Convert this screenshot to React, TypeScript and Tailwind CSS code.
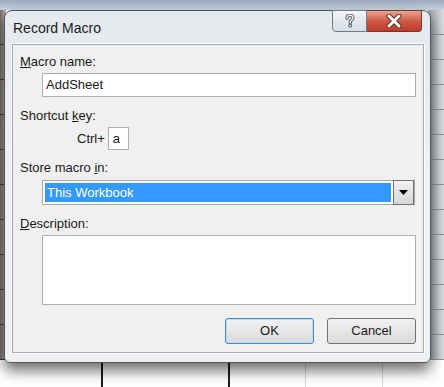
import React from "react";

const font = { fontFamily: '"Liberation Sans", Arial, sans-serif' };

function HelpGlyph() {
  return (
    <svg width="12" height="14" viewBox="0 0 12 14">
      <path
        d="M3 4.2 C3 2.2 4.4 1.3 6 1.3 C7.8 1.3 9 2.4 9 3.9 C9 5.6 7.4 6 6.6 7 C6.2 7.5 6.2 8 6.2 8.8"
        fill="none"
        stroke="#4b5563"
        strokeWidth="3.2"
        strokeLinecap="round"
      />
      <path
        d="M3 4.2 C3 2.2 4.4 1.3 6 1.3 C7.8 1.3 9 2.4 9 3.9 C9 5.6 7.4 6 6.6 7 C6.2 7.5 6.2 8 6.2 8.8"
        fill="none"
        stroke="#eef0f2"
        strokeWidth="1.4"
        strokeLinecap="round"
      />
      <circle cx="6.2" cy="11.6" r="1.9" fill="#4b5563" />
      <circle cx="6.2" cy="11.6" r="0.9" fill="#eef0f2" />
    </svg>
  );
}

function CloseGlyph() {
  return (
    <svg width="16" height="14" viewBox="0 0 16 14">
      <path d="M3 2 L13 12 M13 2 L3 12" stroke="#5a2a22" strokeWidth="5" strokeLinecap="round" />
      <path d="M3 2 L13 12 M13 2 L3 12" stroke="#ffffff" strokeWidth="3" strokeLinecap="round" />
    </svg>
  );
}

export default function App() {
  return (
    <div
      className="relative w-[444px] h-[387px] overflow-hidden bg-white flex flex-col"
      style={font}
    >
      {/* background spreadsheet (desktop behind the window) */}
      <div className="h-[10px] bg-gradient-to-b from-[#98a9bf] to-[#c9d3df]" />
      <div className="h-[350px] flex justify-between">
        <div className="w-[6px] bg-[repeating-linear-gradient(to_bottom,transparent_0px,transparent_34px,#3d3d3d_34px,#3d3d3d_35px),linear-gradient(to_right,#6f6a66,#b9b6b2)]" />
        <div className="w-[16px] bg-[repeating-linear-gradient(to_bottom,transparent_0px,transparent_24px,#8f949a_24px,#8f949a_25px),linear-gradient(to_right,#9a9ea4,#dcdfe2)]" />
      </div>
      <div className="flex-1 flex">
        <div className="w-[101px]" />
        <div className="w-[2px] bg-[#1e1e1e]" />
        <div className="w-[125px]" />
        <div className="w-[2px] bg-[#1e1e1e]" />
        <div className="w-[75px]" />
        <div className="w-[1px] bg-[#d4d4d4]" />
        <div className="w-[76px]" />
        <div className="w-[1px] bg-[#d4d4d4]" />
      </div>

      {/* dialog window */}
      <div className="absolute left-[4px] top-[10px] w-[427px] h-[353px] rounded-t-[8px] rounded-b-[6px] border border-[#4d5660] bg-gradient-to-b from-[#e4e9ef] via-[#eef1f4] to-[#eef0f2] shadow-[0_8px_14px_rgba(0,0,0,0.55)] flex flex-col">
        {/* title bar */}
        <div className="h-[33px] flex items-start pl-[8px] pr-[8px]">
          <span className="mt-[10px] text-[14px] text-[#1b1b1b] leading-[14px] flex-1">Record Macro</span>
          <div className="-mt-[1px] flex h-[22px]">
            <div className="w-[35px] h-[22px] rounded-bl-[4px] border border-[#6e7b8b] bg-gradient-to-b from-[#f3f5f7] to-[#d7dde4] flex items-center justify-center">
              <HelpGlyph />
            </div>
            <div className="w-[55px] h-[22px] rounded-br-[4px] border border-l-0 border-[#6b3a33] bg-gradient-to-b from-[#e8a493] via-[#cf5a45] to-[#c0392b] flex items-center justify-center">
              <CloseGlyph />
            </div>
          </div>
        </div>

        {/* client area */}
        <div className="mx-[7px] w-[412px] h-[309px] border border-[#a4aab1] bg-[#f0f0f0] shadow-[0_0_0_1px_#ffffff] flex flex-col pl-[7px] text-[13px] text-[#1a1a1a] leading-[16px]">
          <div className="mt-[9px]">
            <u>M</u>acro name:
          </div>
          <div className="mt-[3px] ml-[22px] w-[374px] h-[24px] border border-[#abadb3] bg-white flex items-center pl-[3px]">
            AddSheet
          </div>

          <div className="mt-[11px]">
            Shortcut <u>k</u>ey:
          </div>
          <div className="mt-[3px] flex items-center h-[23px]">
            <span className="ml-[57px]">Ctrl+</span>
            <div className="ml-[3px] w-[21px] h-[23px] border border-[#abadb3] bg-white flex items-center pl-[4px]">
              a
            </div>
          </div>

          <div className="mt-[10px]">
            Store macro <u>i</u>n:
          </div>
          <div className="mt-[4px] ml-[22px] w-[373px] h-[25px] border border-[#a9a9a9] bg-white flex items-stretch p-[2px] pr-0">
            <div className="flex-1 bg-[#3399ff] text-white flex items-center pl-[2px] mr-[2px]">
              This Workbook
            </div>
            <div className="w-[21px] -my-[3px] border border-[#707070] bg-gradient-to-b from-[#f2f2f2] to-[#d6d6d6] flex items-center justify-center">
              <svg width="9" height="5" viewBox="0 0 9 5">
                <path d="M0 0 L9 0 L4.5 5 Z" fill="#000" />
              </svg>
            </div>
          </div>

          <div className="mt-[11px]">
            <u>D</u>escription:
          </div>
          <div className="mt-[3px] ml-[22px] w-[374px] h-[70px] border border-[#abadb3] bg-white" />

          <div className="mt-[13px] ml-[205px] flex gap-[13px]">
            <div className="w-[89px] h-[26px] rounded-[3px] border border-[#3c8ccd] bg-gradient-to-b from-[#f2f2f2] to-[#dadada] shadow-[inset_0_0_0_1px_#b8e0f7] flex items-center justify-center">
              OK
            </div>
            <div className="w-[89px] h-[26px] rounded-[3px] border border-[#707070] bg-gradient-to-b from-[#f2f2f2] to-[#dadada] flex items-center justify-center">
              Cancel
            </div>
          </div>
        </div>
      </div>
    </div>
  );
}
